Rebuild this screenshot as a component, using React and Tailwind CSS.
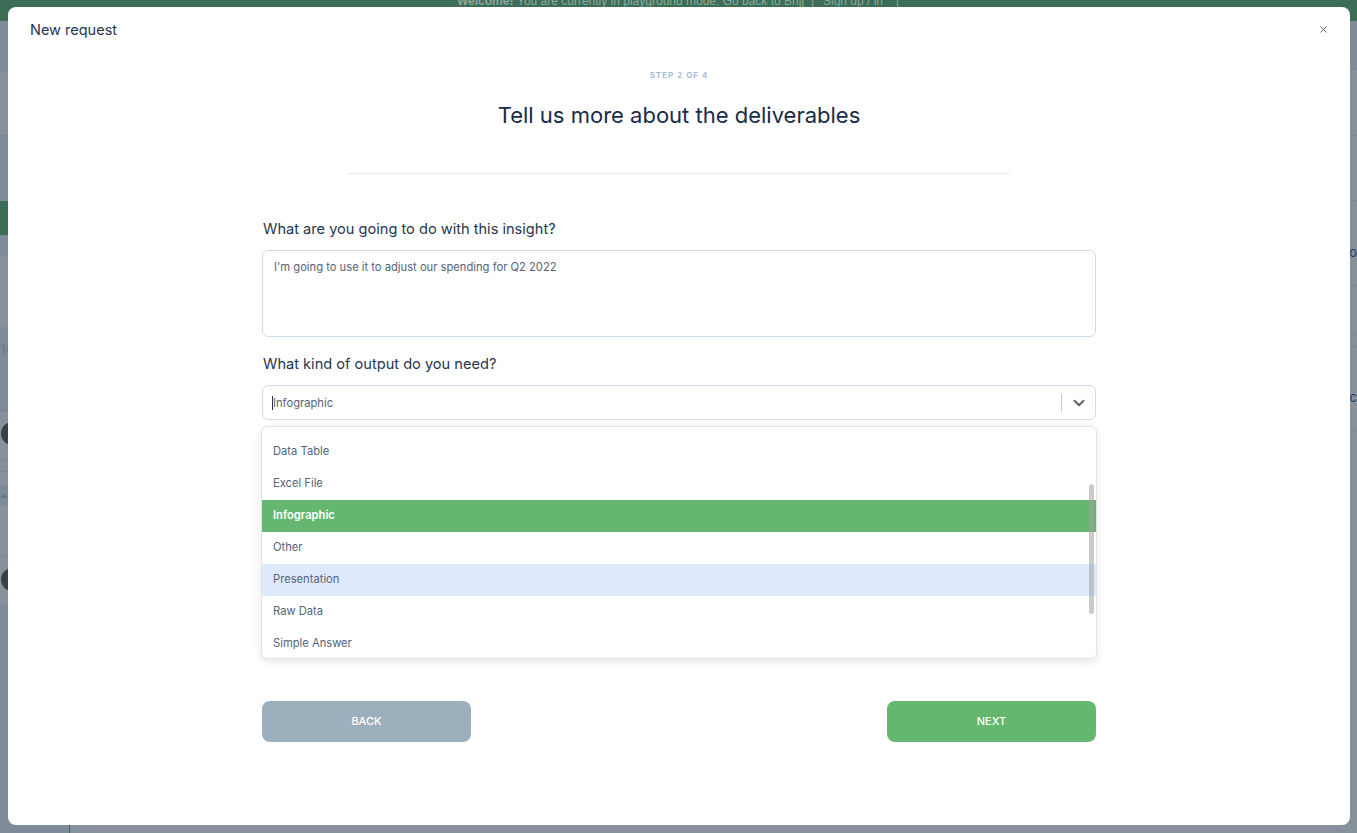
import { X, ChevronDown } from 'lucide-react'

const options = ['Data Table', 'Excel File', 'Infographic', 'Other', 'Presentation', 'Raw Data', 'Simple Answer']

function optionClass(name) {
  if (name === 'Infographic') return 'bg-[#65b76f] text-white font-semibold'
  if (name === 'Presentation') return 'bg-[#deeafc] text-[#566379]'
  return 'text-[#566379]'
}

function Backdrop() {
  return (
    <div className="flex flex-col h-[833px] overflow-hidden bg-[#87919c]">
      <div className="h-[21px] shrink-0 bg-[#3c6e57] pl-[457px] text-[12px] leading-none text-[#8fa89c] font-['Liberation_Sans',sans-serif]">
        <div className="-mt-[5px] flex whitespace-nowrap">
          <b className="w-[60px] shrink-0">Welcome!</b>
          <span className="w-[294px] shrink-0">You are currently in playground mode. Go back to Bnjj</span>
          <span className="w-[12px] shrink-0">|</span>
          <span className="w-[73px] shrink-0">Sign up / in</span>
          <span>|</span>
        </div>
      </div>
      <div className="flex flex-1">
        <div className="w-[70px] shrink-0 border-r border-[#3c6e57] flex flex-col text-[#6d7a8d] text-[15px]">
          <div className="h-[50px] bg-[#808b99] border-b border-[#7b8796]"></div>
          <div className="h-[65px] border-b border-[#7b8796]"></div>
          <div className="h-[65px] bg-[#808b99]"></div>
          <div className="h-[34px] bg-[#3c6e57]"></div>
          <div className="h-[21px] bg-[#808b99]"></div>
          <div className="h-[71px]"></div>
          <div className="h-[85px] bg-[#808b99] border-b border-[#7b8796] pt-[12px]">10</div>
          <div className="h-[48px] border-b border-[#7b8796] relative">
            <div className="absolute left-[1px] top-[10px] w-[23px] h-[23px] rounded-full bg-[#3a3f47]"></div>
          </div>
          <div className="h-[12px] border-b border-[#7b8796]"></div>
          <div className="h-[14px]"></div>
          <div className="h-[19px] bg-[#7d8a9a] flex items-center">
            <div className="w-0 h-0 border-x-[4px] border-x-transparent border-b-[4px] border-b-[#66798c]"></div>
          </div>
          <div className="h-[51px] border-b border-[#7b8796]"></div>
          <div className="h-[50px] border-b border-[#7b8796] relative">
            <div className="absolute left-[1px] top-[12px] w-[23px] h-[23px] rounded-full bg-[#3a3f47]"></div>
          </div>
          <div className="flex-1 bg-[#808b99]"></div>
        </div>
        <div className="flex-1 flex flex-col text-[13px] text-[#1e3a6e]">
          <div className="h-[49px] bg-[#808b99] border-b border-[#7b8796]"></div>
          <div className="h-[66px] border-b border-[#7b8796]"></div>
          <div className="h-[65px] border-b border-[#7b8796]"></div>
          <div className="h-[85px] border-b border-[#7b8796] flex justify-end items-start pt-[42px]">o</div>
          <div className="h-[49px] border-b border-[#7b8796]"></div>
          <div className="h-[12px] border-b border-[#7b8796]"></div>
          <div className="h-[84px] border-b border-[#7b8796] flex justify-end items-start pt-[41px]">c</div>
        </div>
      </div>
    </div>
  )
}

export default function App() {
  return (
    <div className="relative h-[833px] overflow-hidden font-['Inter','Liberation_Sans',sans-serif]">
      <Backdrop />
      <div className="absolute left-[8px] top-[7px] w-[1342px] h-[818px] bg-white rounded-lg">
        <div className="flex items-center justify-between pl-[22px] pr-[21px] h-[45px]">
          <span className="text-[14.5px] text-[#26364f]">New request</span>
          <X size={11} strokeWidth={1.75} className="text-[#3b4a60]" />
        </div>

        <div className="flex flex-col items-center">
          <div className="mt-[18px] text-[8px] leading-[10px] font-semibold tracking-[1px] text-[#a2b5d4]">STEP 2 OF 4</div>
          <h2 className="mt-[19px] text-[22px] leading-[32px] text-[#172b4a]">Tell us more about the deliverables</h2>
          <div className="mt-[42px] w-[662px] border-t border-[#e4ebf2]"></div>
        </div>

        <div className="w-[834px] ml-[254px] mt-[45px]">
          <label className="block pl-px text-[14.6px] leading-[20px] text-[#26364f]">What are you going to do with this insight?</label>
          <div className="mt-[11px] h-[87px] border border-[#cfdcea] rounded-md px-[11px] pt-[7px] text-[11.2px] leading-[18px] text-[#566379]">
            I'm going to use it to adjust our spending for Q2 2022
          </div>

          <label className="block pl-px mt-[17px] text-[14.6px] leading-[20px] text-[#26364f]">What kind of output do you need?</label>
          <div className="mt-[11px] h-[35px] border border-[#cfdcea] rounded-md flex items-center pl-[9px] text-[11.2px] text-[#566379]">
            <span className="w-px h-[14px] bg-[#26364f]"></span>
            <span className="flex-1 pt-px">Infographic</span>
            <span className="w-px h-[18px] bg-[#cccccc]"></span>
            <span className="w-[33px] flex justify-center">
              <ChevronDown size={18} strokeWidth={2.75} className="text-[#666666]" />
            </span>
          </div>

          <div className="relative mt-[6px] -mx-px h-[233px] overflow-hidden bg-white border border-[#e2e2e2] rounded-md shadow-[0_3px_10px_rgba(0,0,0,0.1)] pt-[9px] text-[11.2px]">
            {options.map(name => (
              <div key={name} className={`h-[32px] flex items-center pl-[11px] pb-[1px] ${optionClass(name)}`}>{name}</div>
            ))}
            <div className="absolute right-[2px] top-[57px] w-[5px] h-[130px] rounded-full bg-[#a0a0a0]/55"></div>
          </div>

          <div className="flex justify-between mt-[42px]">
            <button className="w-[209px] h-[41px] rounded-lg bg-[#9cafbc] text-white text-[11px] font-medium">BACK</button>
            <button className="w-[209px] h-[41px] rounded-lg bg-[#65b76f] text-white text-[11px] font-medium">NEXT</button>
          </div>
        </div>
      </div>
    </div>
  )
}
